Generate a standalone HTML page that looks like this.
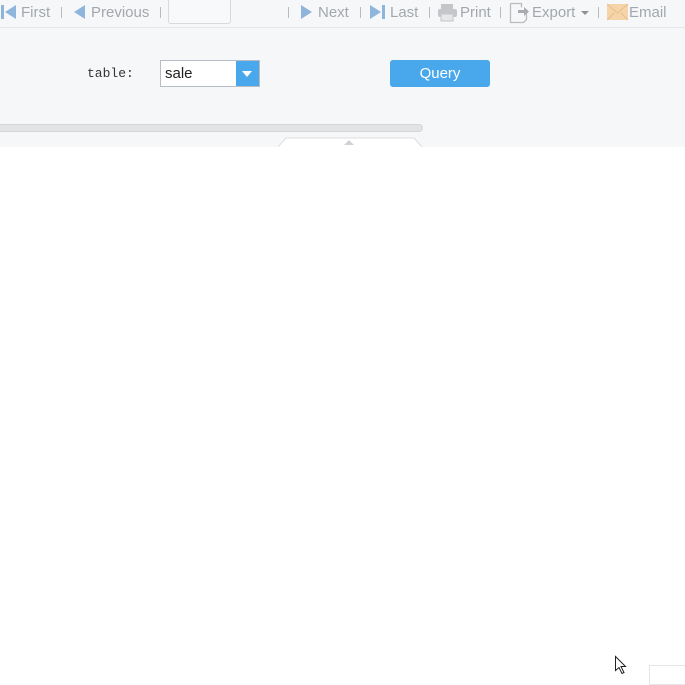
<!DOCTYPE html>
<html><head><meta charset="utf-8"><style>
*{margin:0;padding:0;box-sizing:border-box}
body{width:685px;height:676px;background:#fff;position:relative;overflow:hidden;font-family:"Liberation Sans",sans-serif}
.top{position:absolute;left:0;top:0;width:685px;height:147px;background:#f6f7f9}
.tb{position:absolute;left:0;top:0;width:685px;height:28px;border-bottom:1px solid #e4e6ea}
.t{position:absolute;top:4px;font-size:15px;color:#a3a7ad}
.sep{position:absolute;top:7px;width:1px;height:11px;background:#b8bbc0}
.tri{position:absolute;top:5px;width:0;height:0;border-top:7px solid transparent;border-bottom:7px solid transparent}
</style></head><body>
<div class="top">
<div class="tb">
 <div style="position:absolute;left:1px;top:5px;width:3px;height:14px;background:#8fb5dc"></div>
 <div class="tri" style="left:5px;border-right:11px solid #8fb5dc"></div>
 <span class="t" style="left:21px">First</span>
 <div class="sep" style="left:61px"></div>
 <div class="tri" style="left:74px;border-right:11px solid #8fb5dc"></div>
 <span class="t" style="left:91px">Previous</span>
 <div class="sep" style="left:160px"></div>
 <div style="position:absolute;left:168px;top:0;width:63px;height:24px;border:1px solid #d6d9de;border-top:none;border-radius:0 0 3px 3px;background:#f8f9fa"></div>
 <div class="sep" style="left:288px"></div>
 <div class="tri" style="left:301px;border-left:11px solid #8fb5dc"></div>
 <span class="t" style="left:318px">Next</span>
 <div class="sep" style="left:360px"></div>
 <div class="tri" style="left:370px;border-left:11px solid #8fb5dc"></div>
 <div style="position:absolute;left:382px;top:5px;width:3px;height:14px;background:#8fb5dc"></div>
 <span class="t" style="left:390px">Last</span>
 <div class="sep" style="left:429px"></div>
 <svg style="position:absolute;left:437px;top:3px" width="21" height="20"><rect x="4" y="1" width="12" height="5" fill="#c4c6c9"/><rect x="1" y="6" width="19" height="8" rx="2" fill="#c4c6c9"/><rect x="4" y="11" width="12" height="7" fill="#e6e7e8" stroke="#c4c6c9"/></svg>
 <span class="t" style="left:460px">Print</span>
 <div class="sep" style="left:500px"></div>
 <svg style="position:absolute;left:509px;top:2px" width="22" height="22"><path d="M1.5 1.5h11v4M1.5 1.5v19h13l3-3v-6" fill="none" stroke="#b9bbbe" stroke-width="1.3"/><path d="M9 8h6V5l5 4.5-5 4.5v-3H9z" fill="#a9acaf"/></svg>
 <span class="t" style="left:532px">Export</span>
 <div style="position:absolute;left:581px;top:11px;border-left:4px solid transparent;border-right:4px solid transparent;border-top:4px solid #8d9196"></div>
 <div class="sep" style="left:598px"></div>
 <svg style="position:absolute;left:607px;top:3px" width="21" height="18"><rect x="0" y="1" width="21" height="16" fill="#f4d4a8"/><path d="M0 1l10.5 9L21 1M0 17l7-7M21 17l-7-7" fill="none" stroke="#e8bf88" stroke-width="1"/></svg>
 <span class="t" style="left:629px">Email</span>
</div>
<span style="position:absolute;left:87px;top:66px;font-family:'Liberation Mono',monospace;font-size:13px;color:#333">table:</span>
<div style="position:absolute;left:160px;top:60px;width:100px;height:27px;border:1px solid #b7bcc6;background:#fff">
 <span style="position:absolute;left:4px;top:4px;font-size:15px;color:#222">sale</span>
 <div style="position:absolute;left:75px;top:0;width:23px;height:25px;background:#49a7eb"></div>
 <div style="position:absolute;left:81px;top:10px;border-left:5px solid transparent;border-right:5px solid transparent;border-top:6px solid #fff"></div>
</div>
<div style="position:absolute;left:390px;top:60px;width:100px;height:27px;background:#49a7eb;border-radius:3px;color:#fff;font-size:15px;text-align:center;line-height:27px">Query</div>
<div style="position:absolute;left:-10px;top:124px;width:433px;height:8px;background:#e2e3e5;border:1px solid #d6d7d9;border-radius:4px"></div>
<svg style="position:absolute;left:278px;top:137px" width="145" height="10"><path d="M0 10L8 1H136L144 10" fill="#fff" stroke="#dcdde0"/><path d="M66 8l5-5 5 5z" fill="#cfd1d4"/></svg>
</div>
<svg style="position:absolute;left:614px;top:655px" width="14" height="20"><path d="M1.5 1.5v14l3.5-3 3 6 2-1-3-6h4.5z" fill="#fff" stroke="#222" stroke-width="1"/></svg>
<div style="position:absolute;left:649px;top:665px;width:40px;height:20px;border:1px solid #e6e6e6"></div>
</body></html>
